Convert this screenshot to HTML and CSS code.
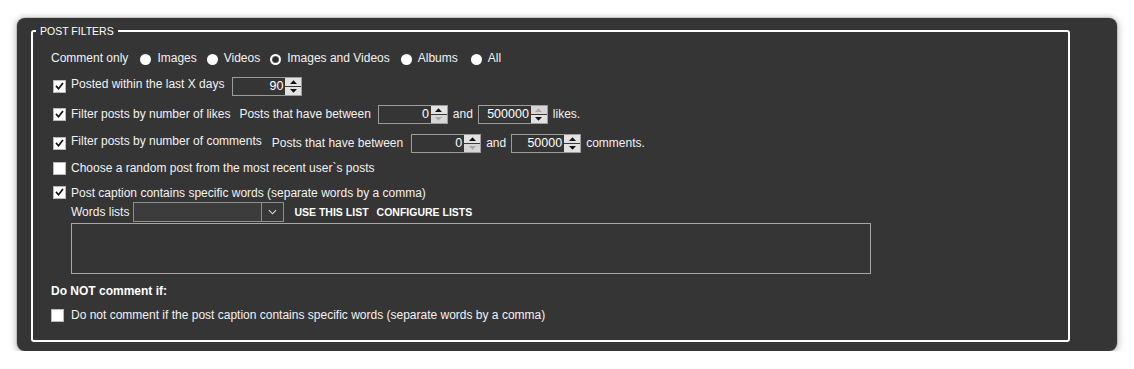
FILE: index.html
```html
<!DOCTYPE html>
<html>
<head>
<meta charset="utf-8">
<link rel="stylesheet" href="styles.css">
</head>
<body>
<div class="page">
  <div class="panel">
    <fieldset class="filters">
      <legend>POST FILTERS</legend>
      <div class="content">
        <div class="row r1">
          <span class="lbl first">Comment only</span>
          <span class="radio"></span><span class="opt">Images</span>
          <span class="radio"></span><span class="opt">Videos</span>
          <span class="radio checked"></span><span class="opt wide-gap">Images and Videos</span>
          <span class="radio"></span><span class="opt wider-gap">Albums</span>
          <span class="radio"></span><span class="opt">All</span>
        </div>

        <div class="row r2">
          <span class="cb on"><svg viewBox="0 0 13 13"><path d="M3 6.5 L5.4 9.2 L10 3.2"/></svg></span>
          <span class="lbl text-up">Posted within the last X days</span>
          <span class="num g8"><span class="val">90</span><span class="spin"><span class="btn"><svg viewBox="0 0 9 6"><path d="M1 5 L4.5 1.2 L8 5 Z"/></svg></span><span class="btn"><svg viewBox="0 0 9 6"><path d="M1 1 L4.5 4.8 L8 1 Z"/></svg></span></span></span>
        </div>

        <div class="row r3">
          <span class="cb on"><svg viewBox="0 0 13 13"><path d="M3 6.5 L5.4 9.2 L10 3.2"/></svg></span>
          <span class="lbl">Filter posts by number of likes</span>
          <span class="lbl g9">Posts that have between</span>
          <span class="num g7"><span class="val">0</span><span class="spin"><span class="btn"><svg viewBox="0 0 9 6"><path d="M1 5 L4.5 1.2 L8 5 Z"/></svg></span><span class="btn dis"><svg viewBox="0 0 9 6"><path d="M1 1 L4.5 4.8 L8 1 Z"/></svg></span></span></span>
          <span class="lbl g5">and</span>
          <span class="num g5"><span class="val">500000</span><span class="spin"><span class="btn dis"><svg viewBox="0 0 9 6"><path d="M1 5 L4.5 1.2 L8 5 Z"/></svg></span><span class="btn"><svg viewBox="0 0 9 6"><path d="M1 1 L4.5 4.8 L8 1 Z"/></svg></span></span></span>
          <span class="lbl g5">likes.</span>
        </div>

        <div class="row r4">
          <span class="cb on"><svg viewBox="0 0 13 13"><path d="M3 6.5 L5.4 9.2 L10 3.2"/></svg></span>
          <span class="lbl text-up">Filter posts by number of comments</span>
          <span class="lbl g10">Posts that have between</span>
          <span class="num g8"><span class="val">0</span><span class="spin"><span class="btn"><svg viewBox="0 0 9 6"><path d="M1 5 L4.5 1.2 L8 5 Z"/></svg></span><span class="btn dis"><svg viewBox="0 0 9 6"><path d="M1 1 L4.5 4.8 L8 1 Z"/></svg></span></span></span>
          <span class="lbl g5">and</span>
          <span class="num g5"><span class="val">50000</span><span class="spin"><span class="btn"><svg viewBox="0 0 9 6"><path d="M1 5 L4.5 1.2 L8 5 Z"/></svg></span><span class="btn"><svg viewBox="0 0 9 6"><path d="M1 1 L4.5 4.8 L8 1 Z"/></svg></span></span></span>
          <span class="lbl g5">comments.</span>
        </div>

        <div class="row r5">
          <span class="cb"></span>
          <span class="lbl">Choose a random post from the most recent user`s posts</span>
        </div>

        <div class="row r6">
          <span class="cb on"><svg viewBox="0 0 13 13"><path d="M3 6.5 L5.4 9.2 L10 3.2"/></svg></span>
          <span class="lbl">Post caption contains specific words (separate words by a comma)</span>
        </div>

        <div class="row r7">
          <span class="lbl indent">Words lists</span>
          <span class="combo"><span class="combo-val"></span><span class="combo-btn"><svg viewBox="0 0 10 6"><path d="M1 1 L5 5 L9 1"/></svg></span></span>
          <span class="link">USE THIS LIST</span>
          <span class="link tight">CONFIGURE LISTS</span>
        </div>

        <div class="words"></div>

        <div class="heading">Do NOT comment if:</div>

        <div class="row r8">
          <span class="cb flush"></span>
          <span class="lbl">Do not comment if the post caption contains specific words (separate words by a comma)</span>
        </div>
      </div>
    </fieldset>
  </div>
</div>
</body>
</html>
```

FILE: styles.css
```css
html, body {
  margin: 0;
  padding: 0;
  background: #ffffff;
}

body {
  font-family: "Liberation Sans", Arial, sans-serif;
  font-size: 12px;
  color: #f2f2f2;
}

.page {
  padding: 18px 0 0 17px;
}

.panel {
  width: 1100px;
  height: 333px;
  box-sizing: border-box;
  background: #353535;
  border-radius: 8px;
  box-shadow: 0 0 0 1px rgba(0, 0, 0, 0.12), 0 1px 6px 2px rgba(0, 0, 0, 0.22);
  padding: 7px 0 0 14px;
}

.filters {
  margin: 0;
  padding: 0;
  width: 1039px;
  height: 317px;
  box-sizing: border-box;
  border: 2px solid #ffffff;
  border-radius: 3px;
  min-width: 0;
}

.filters legend {
  margin-left: 3px;
  padding: 0 4px;
  font-size: 10.5px;
  line-height: 12px;
  color: #ffffff;
}

.content {
  padding: 11px 0 0 18px;
  display: flex;
  flex-direction: column;
}

.row {
  display: flex;
  align-items: center;
  height: 20px;
  white-space: nowrap;
}

.r1 { margin-top: 0; }
.r2 { margin-top: 8px; }
.r3 { margin-top: 8px; }
.r4 { margin-top: 9px; }
.r5 { margin-top: 5px; }
.r6 { margin-top: 5px; height: 19px; }
.r7 { margin-top: 0; }
.r8 { margin-top: 5px; }

.lbl {
  line-height: 16px;
}

.text-up {
  position: relative;
  top: -2px;
}

.first {
  margin-right: 12px;
}

.opt {
  margin-left: 6px;
  margin-right: 10px;
}

.opt.wide-gap {
  margin-right: 11px;
}

.opt.wider-gap {
  margin-right: 13px;
}

.radio {
  width: 11px;
  height: 11px;
  border-radius: 50%;
  background: #ffffff;
  flex: none;
  display: flex;
  align-items: center;
  justify-content: center;
  margin-top: 3px;
}

.radio.checked::after {
  content: "";
  width: 5px;
  height: 5px;
  border-radius: 50%;
  background: #2a2a2a;
  box-shadow: 0 0 0 1px #555;
}

.cb {
  width: 13px;
  height: 13px;
  box-sizing: border-box;
  background: #ffffff;
  border: 1px solid #b9b9b9;
  flex: none;
  margin-left: 2px;
  margin-right: 5px;
  display: flex;
}

.cb.flush {
  margin-left: 0;
  margin-right: 7px;
}

.cb svg {
  width: 11px;
  height: 11px;
}

.cb svg path {
  fill: none;
  stroke: #111111;
  stroke-width: 2;
  stroke-linecap: square;
}

.g5 { margin-left: 5px; }
.g7 { margin-left: 7px; }
.g8 { margin-left: 8px; }
.g9 { margin-left: 9px; }
.g10 { margin-left: 10px; }

.num {
  display: flex;
  width: 70px;
  height: 19px;
  box-sizing: border-box;
  border: 1px solid #9c9c9c;
  flex: none;
}

.num .val {
  flex: 1;
  text-align: right;
  padding-right: 2px;
  line-height: 17px;
  font-size: 12.5px;
  color: #ffffff;
}

.spin {
  width: 16px;
  display: flex;
  flex-direction: column;
  gap: 1px;
  background: #3a3a3a;
}

.spin .btn {
  flex: 1;
  background: #e2e2e2;
  display: flex;
  align-items: center;
  justify-content: center;
}

.spin .btn svg {
  width: 9px;
  height: 6px;
}

.spin .btn svg path {
  fill: #111111;
}

.spin .btn.dis {
  background: #d6d6d6;
}

.spin .btn.dis svg path {
  fill: #a8a8a8;
}

.indent {
  margin-left: 20px;
}

.combo {
  display: flex;
  width: 151px;
  height: 20px;
  box-sizing: border-box;
  border: 1px solid #8e8e8e;
  margin-left: 4px;
  background: #3c3c3c;
  flex: none;
}

.combo-val {
  flex: 1;
}

.combo-btn {
  width: 21px;
  border-left: 1px solid #8e8e8e;
  display: flex;
  align-items: center;
  justify-content: center;
  background: #383838;
}

.combo-btn svg {
  width: 9px;
  height: 6px;
}

.combo-btn svg path {
  fill: none;
  stroke: #dddddd;
  stroke-width: 1.2;
}

.link {
  font-weight: bold;
  font-size: 10.5px;
  color: #ffffff;
  margin-left: 10px;
}

.link.tight {
  margin-left: 8px;
}

.words {
  margin-top: 1px;
  margin-left: 20px;
  width: 800px;
  height: 51px;
  box-sizing: border-box;
  border: 1px solid #a6a6a6;
}

.heading {
  margin-top: 8px;
  height: 18px;
  line-height: 18px;
  font-weight: bold;
  font-size: 12px;
  color: #ffffff;
}
```
